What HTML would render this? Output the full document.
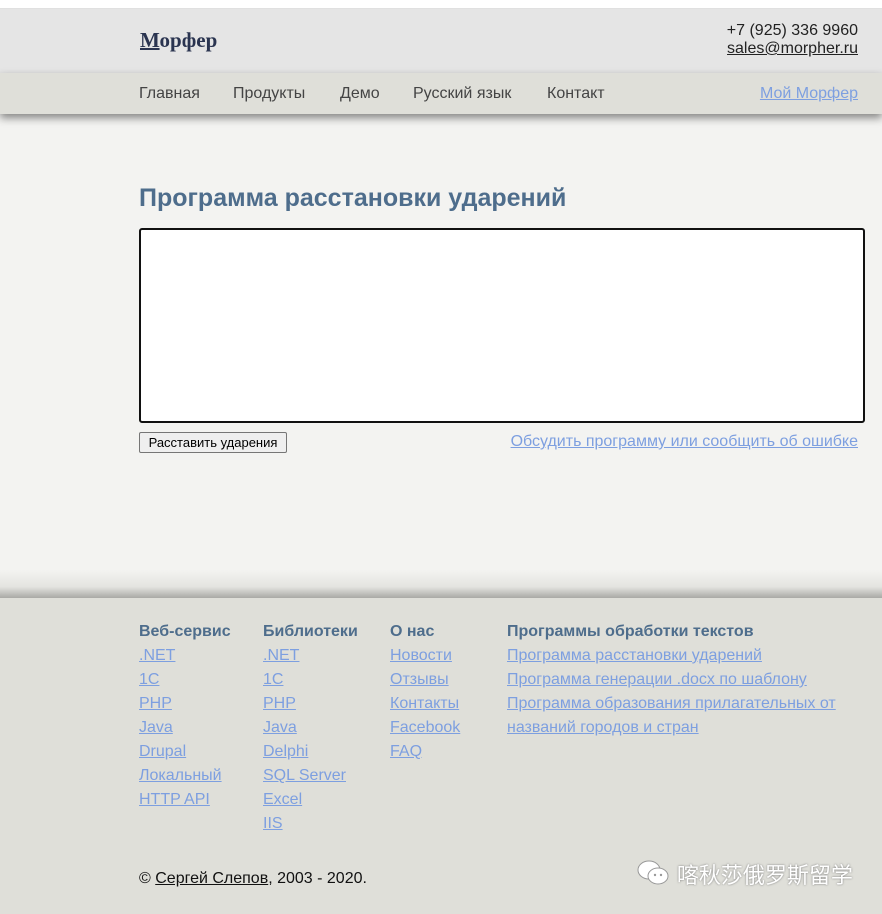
<!DOCTYPE html>
<html><head><meta charset="utf-8"><style>
*{margin:0;padding:0;box-sizing:border-box}
body{width:882px;height:914px;background:#f3f3f1;font-family:"Liberation Sans",Arial,sans-serif;position:relative;overflow:hidden;font-size:16px}
.top{position:absolute;left:0;top:0;width:882px;height:9px;background:#fff;border-bottom:1px solid #e0e0e0}
.hdr{position:absolute;left:0;top:9px;width:882px;height:64px;background:#e5e5e5}
.logo{position:absolute;left:140px;top:19px;font-family:"Liberation Serif",serif;font-weight:bold;font-size:21px;color:#2a3450}
.logo u{text-decoration-thickness:2px}
.contact{position:absolute;right:24px;top:13px;text-align:right;color:#222;font-size:16px;line-height:18px}
.contact a{color:#222}
.nav{position:absolute;left:0;top:73px;width:882px;height:41px;background:#dfdfd9;box-shadow:0 4px 8px rgba(0,0,0,.45)}
.nav span{position:absolute;top:12px;font-size:16px;color:#444}
.nav a{position:absolute;right:24px;top:12px;color:#7d9fe0}
h1{position:absolute;left:139px;top:184px;font-size:25px;color:#4e6d8c;font-weight:bold}
.ta{position:absolute;left:139px;top:228px;width:726px;height:195px;background:#fff;border:2px solid #111;border-radius:3px}
.btn{position:absolute;left:139px;top:432px;width:148px;height:21px;border:1px solid #767676;border-radius:2px;background:#efefef;font-size:13px;text-align:center;line-height:19px;color:#000}
.disc{position:absolute;right:24px;top:433px;color:#7d9fe0;text-decoration:underline;font-size:16px}
.foot{position:absolute;left:0;top:598px;width:882px;height:316px;background:#dfdfd9}
.shade{position:absolute;left:0;top:570px;width:882px;height:28px;background:linear-gradient(#f3f3f1,#e4e4e0 60%,#a9a9a5)}
.col{position:absolute;top:620px;line-height:24px;font-size:16px}
.col b{display:block;color:#4e6d8c}
.col a{display:block;color:#7d9fe0;text-decoration:underline}
.copy{position:absolute;left:139px;top:870px;color:#111;font-size:16px}
.copy a{color:#111}
.wm{position:absolute;left:636px;top:858px;color:#fff;font-family:"Noto Sans CJK SC",sans-serif;font-size:22px;text-shadow:0 0 2px #777}
</style></head><body>
<div class="top"></div>
<div class="hdr"><div class="logo"><u>М</u>орфер</div>
<div class="contact">+7 (925) 336 9960<br><a href="#">sales@morpher.ru</a></div></div>
<div class="nav"><span style="left:139px">Главная</span><span style="left:233px">Продукты</span><span style="left:340px">Демо</span><span style="left:413px">Русский язык</span><span style="left:547px">Контакт</span><a href="#">Мой Морфер</a></div>
<h1>Программа расстановки ударений</h1>
<div class="ta"></div>
<div class="btn">Расставить ударения</div>
<div class="disc">Обсудить программу или сообщить об ошибке</div>
<div class="shade"></div>
<div class="foot"></div>
<div class="col" style="left:139px"><b>Веб-сервис</b><a>.NET</a><a>1C</a><a>PHP</a><a>Java</a><a>Drupal</a><a>Локальный</a><a>HTTP API</a></div>
<div class="col" style="left:263px"><b>Библиотеки</b><a>.NET</a><a>1C</a><a>PHP</a><a>Java</a><a>Delphi</a><a>SQL Server</a><a>Excel</a><a>IIS</a></div>
<div class="col" style="left:390px"><b>О нас</b><a>Новости</a><a>Отзывы</a><a>Контакты</a><a>Facebook</a><a>FAQ</a></div>
<div class="col" style="left:507px;width:340px"><b>Программы обработки текстов</b><a>Программа расстановки ударений</a><a>Программа генерации .docx по шаблону</a><a>Программа образования прилагательных от названий городов и стран</a></div>
<div class="copy">© <a href="#">Сергей Слепов</a>, 2003 - 2020.</div>
<div class="wm"><svg width="36" height="28" viewBox="0 0 36 28" style="vertical-align:-4px"><ellipse cx="13" cy="11" rx="11" ry="9" fill="#fff" stroke="#999"/><ellipse cx="22" cy="17" rx="10" ry="8" fill="#fff" stroke="#999"/><circle cx="19" cy="16" r="1.2" fill="#999"/><circle cx="25" cy="16" r="1.2" fill="#999"/></svg> 喀秋莎俄罗斯留学</div>
</body></html>
